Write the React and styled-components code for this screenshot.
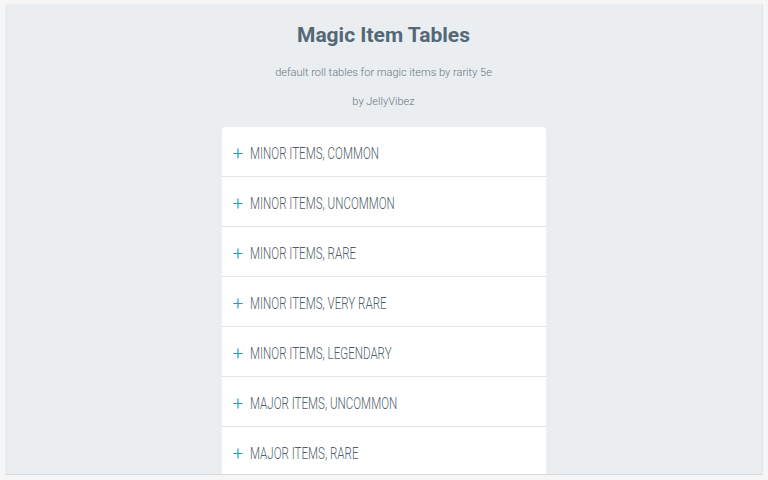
import React from 'react'
import styled, { createGlobalStyle } from 'styled-components'

const tables = [
  'Minor Items, Common',
  'Minor Items, Uncommon',
  'Minor Items, Rare',
  'Minor Items, Very Rare',
  'Minor Items, Legendary',
  'Major Items, Uncommon',
  'Major Items, Rare',
]

const GlobalStyle = createGlobalStyle`
  html, body {
    margin: 0;
    padding: 0;
    background: #f6f6f6;
    font-family: Roboto, "Liberation Sans", sans-serif;
  }
`

const Page = styled.div`
  padding: 4px 5px 5px 5px;
  height: 480px;
  box-sizing: border-box;
`

const Panel = styled.main`
  height: 471px;
  box-sizing: border-box;
  background: #eaeef1;
  border-right: 1px solid #e2e5e8;
  border-bottom: 1px solid #d6d9dc;
  overflow: hidden;
  display: flex;
  flex-direction: column;
  align-items: center;
`

const Title = styled.h1`
  margin: 18px 0 0;
  font-size: 21px;
  font-weight: 700;
  color: #546876;
  line-height: 26px;
`

const Sub = styled.p`
  margin: ${p => p.top}px 0 0;
  font-size: 11px;
  font-weight: 300;
  color: #66757f;
  line-height: 14px;
`

const Card = styled.ul`
  list-style: none;
  margin: 18px 0 0;
  padding: 0;
  width: 324px;
  background: #fff;
  border-radius: 3px;
`

const Row = styled.li`
  box-sizing: content-box;
  display: flex;
  align-items: center;
  padding: 2px 0 0 11px;
  height: 47px;
  border-top: ${p => (p.first ? 'none' : '1px solid #e3e6e8')};
`

const Plus = styled.span`
  color: #1aa0b4;
  font-size: 19px;
  font-weight: 300;
  width: 17px;
  line-height: 1;
  margin-top: 1px;
`

const Label = styled.span`
  display: inline-block;
  font-size: 17px;
  font-weight: 300;
  text-transform: uppercase;
  color: #4f5f6a;
  transform: scaleX(0.68);
  transform-origin: left center;
  white-space: nowrap;
`

export default function App() {
  return (
    <>
      <GlobalStyle />
      <Page>
        <Panel>
          <Title>Magic Item Tables</Title>
          <Sub top={18}>default roll tables for magic items by rarity 5e</Sub>
          <Sub top={15}>by JellyVibez</Sub>
          <Card>
            {tables.map((t, i) => (
              <Row key={t} first={i === 0}>
                <Plus>+</Plus>
                <Label>{t}</Label>
              </Row>
            ))}
          </Card>
        </Panel>
      </Page>
    </>
  )
}
